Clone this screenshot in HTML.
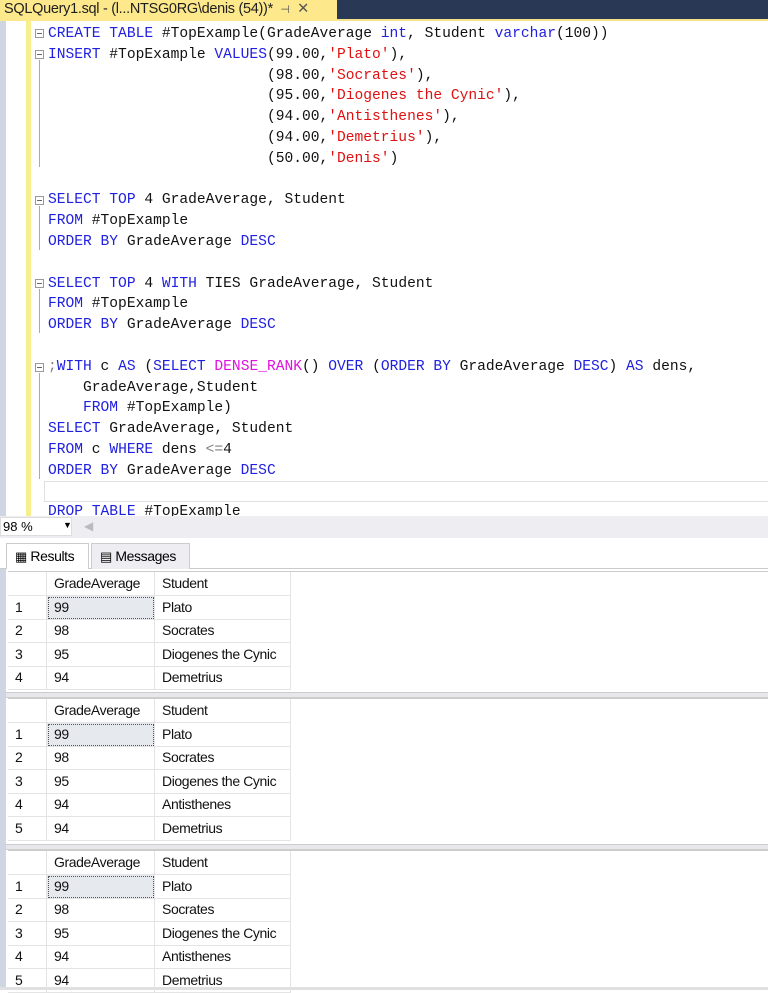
<!DOCTYPE html>
<html><head><style>
*{margin:0;padding:0;box-sizing:border-box}
body{width:768px;height:990px;overflow:hidden;background:#fff;position:relative;font-family:"Liberation Sans",sans-serif}
.title{position:absolute;left:0;top:0;width:768px;height:21px;background:#293955;border-bottom:2px solid #f5e28a}
.tab{position:absolute;left:0;top:0;width:337px;height:21px;background:#fde88c;font-size:14.5px;color:#1e1e1e;padding:1px 0 0 4px;white-space:nowrap;letter-spacing:-0.3px}
.lstrip{position:absolute;left:0;top:21px;width:6px;height:969px;background:#cfd5e3}
.ybar{position:absolute;left:26px;top:21px;width:5px;height:495px;background:#f7ee8c}
.code{position:absolute;left:48px;top:24px;font-family:"Liberation Mono",monospace;font-size:14.6px;line-height:20.8px;white-space:pre;color:#111}
.k{color:#2020e0}.s{color:#e01010}.g{color:#808080}.f{color:#e010e0}
.fold{position:absolute;left:35px;width:9px;height:9px;border:1px solid #999;background:#fff}
.fold:after{content:"";position:absolute;left:1px;top:3px;width:5px;height:1px;background:#666}
.vl{position:absolute;left:39px;width:1px;background:#aaa}
.curline{position:absolute;left:44px;top:481px;width:724px;height:21px;border:1px solid #e0e0e0;border-right:none}
.combo{position:absolute;left:0;top:1px;width:72px;height:19px;background:#fff;border:1px solid #ddd;font-size:13px;padding:1px 0 0 2px}
.tabs{position:absolute;top:538px;height:31px;border-bottom:1px solid #ccc}
.rt{position:absolute;top:5px;height:26px;font-size:14px;padding:4px 0 0 8px;border:1px solid #ccc;border-bottom:none;letter-spacing:-0.4px}
.grid{position:absolute;left:8px;width:760px;background:#fff;border-top:1px solid #ccc}
.grid .r{position:absolute;left:0;height:24px;font-size:14px;letter-spacing:-0.4px;color:#111}
.c{position:absolute;top:0;height:24px;border-right:1px solid #e4e4e4;border-bottom:1px solid #e4e4e4;padding:3px 0 0 7px;white-space:nowrap}
.sep{position:absolute;left:6px;width:762px;height:6px;background:#e8e8ec;border-top:1px solid #ccc;border-bottom:1px solid #ccc}
</style></head><body>
<div class="title"><div class="tab">SQLQuery1.sql - (l...NTSG0RG\denis (54))* &nbsp;<span style="color:#555;font-size:11px">⊣</span>&nbsp; <span style="color:#555">✕</span></div></div>
<div class="lstrip"></div>
<div class="ybar"></div>
<div class="curline"></div>
<div class="fold" style="top:29px"></div>
<div class="fold" style="top:50px"></div>
<div class="vl" style="top:60px;height:107px"></div>
<div class="fold" style="top:196px"></div>
<div class="vl" style="top:206px;height:44px"></div>
<div class="fold" style="top:279px"></div>
<div class="vl" style="top:289px;height:44px"></div>
<div class="fold" style="top:363px"></div>
<div class="vl" style="top:373px;height:106px"></div>
<div class="code"><span class="k">CREATE TABLE</span> #TopExample(GradeAverage <span class="k">int</span>, Student <span class="k">varchar</span>(100))
<span class="k">INSERT</span> #TopExample <span class="k">VALUES</span>(99.00,<span class="s">'Plato'</span>),
                         (98.00,<span class="s">'Socrates'</span>),
                         (95.00,<span class="s">'Diogenes the Cynic'</span>),
                         (94.00,<span class="s">'Antisthenes'</span>),
                         (94.00,<span class="s">'Demetrius'</span>),
                         (50.00,<span class="s">'Denis'</span>)

<span class="k">SELECT TOP</span> 4 GradeAverage, Student
<span class="k">FROM</span> #TopExample
<span class="k">ORDER BY</span> GradeAverage <span class="k">DESC</span>

<span class="k">SELECT TOP</span> 4 <span class="k">WITH</span> TIES GradeAverage, Student
<span class="k">FROM</span> #TopExample
<span class="k">ORDER BY</span> GradeAverage <span class="k">DESC</span>

<span class="g">;</span><span class="k">WITH</span> c <span class="k">AS</span> (<span class="k">SELECT</span> <span class="f">DENSE_RANK</span>() <span class="k">OVER</span> (<span class="k">ORDER BY</span> GradeAverage <span class="k">DESC</span>) <span class="k">AS</span> dens,
    GradeAverage,Student
    <span class="k">FROM</span> #TopExample)
<span class="k">SELECT</span> GradeAverage, Student
<span class="k">FROM</span> c <span class="k">WHERE</span> dens <span class="g">&lt;=</span>4
<span class="k">ORDER BY</span> GradeAverage <span class="k">DESC</span>

<span class="k">DROP TABLE</span> #TopExample</div>
<div style="position:absolute;left:0;top:516px;width:768px;height:22px;background:#eeeef2"><div class="combo">98 % <span style="position:absolute;left:62px;top:2px;font-size:9px">▼</span></div><span style="position:absolute;left:84px;top:3px;color:#bbb;font-size:12px">◀</span></div>
<div class="tabs" style="left:0;width:768px;background:#fff">
<div class="rt" style="left:6px;width:83px;background:#fff"><span style="font-size:13px">▦</span> Results</div>
<div class="rt" style="left:91px;width:99px;background:#eeeef2;padding-left:8px"><span style="font-size:13px">▤</span> Messages</div>
</div>
<div id="g"></div>
<script>
const sets=[[571,[["99","Plato"],["98","Socrates"],["95","Diogenes the Cynic"],["94","Demetrius"]]],
[698,[["99","Plato"],["98","Socrates"],["95","Diogenes the Cynic"],["94","Antisthenes"],["94","Demetrius"]]],
[850,[["99","Plato"],["98","Socrates"],["95","Diogenes the Cynic"],["94","Antisthenes"],["94","Demetrius"]]]];
let h="";
sets.forEach(([t,rows],i)=>{
 const end=i==0?692:(i==1?844:990);
 h+=`<div class="grid" style="top:${t}px;height:${end-t}px">`;
 const row=(y,a,b,c,sel)=>`<div class="r" style="top:${y}px"><div class="c" style="left:0;width:39px">${a}</div><div class="c" style="left:39px;width:108px;${sel?'background:#e6e9ee;outline:1px dotted #555;outline-offset:-2px':''}">${b}</div><div class="c" style="left:147px;width:136px">${c}</div></div>`;
 h+=row(0,"","GradeAverage","Student");
 rows.forEach((r,j)=>{h+=row(23.6*(j+1),j+1,r[0],r[1],j==0)});
 h+=`</div>`;
 if(i<2)h+=`<div class="sep" style="top:${end}px"></div>`;
});
document.getElementById("g").innerHTML=h;
</script>
<div style="position:absolute;left:0;top:987px;width:768px;height:3px;background:#e0e0e0"></div>
</body></html>
